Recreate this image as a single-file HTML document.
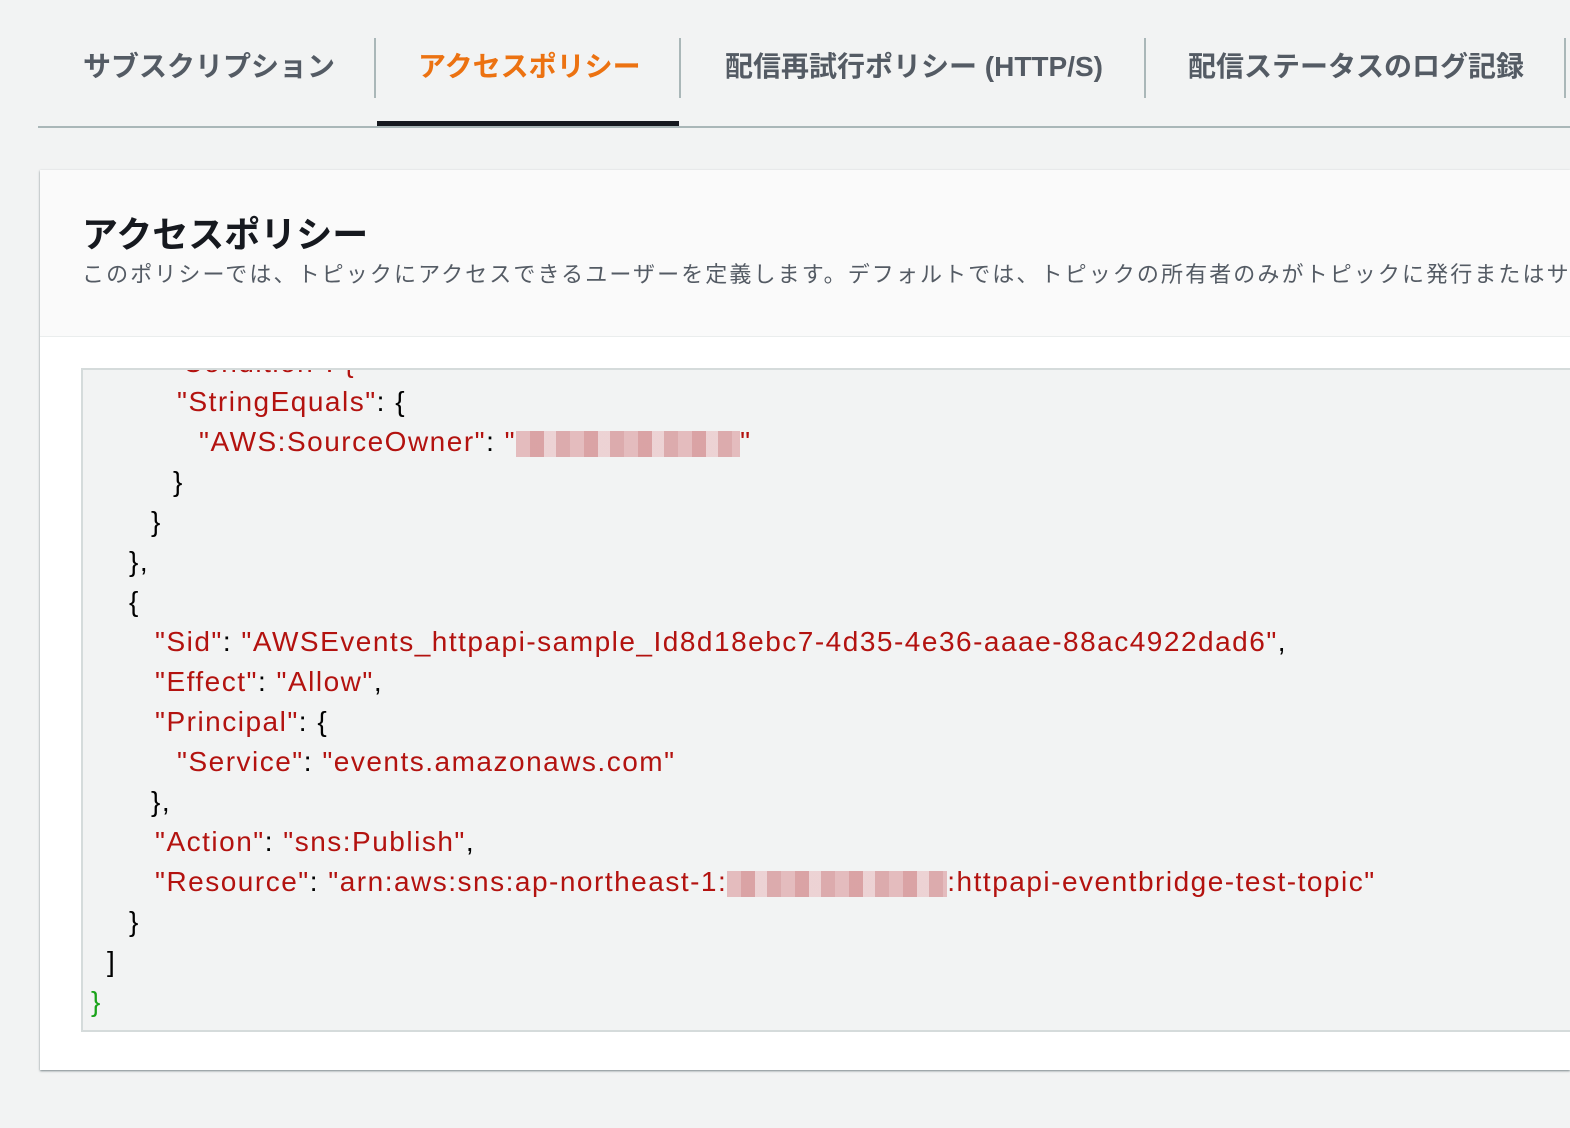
<!DOCTYPE html>
<html><head><meta charset="utf-8"><style>
html,body{margin:0;width:1570px;height:1128px;overflow:hidden}
body{background:#f2f3f3;position:relative;font-family:"Liberation Sans","Noto Sans CJK JP",sans-serif}
.tab{position:absolute;top:46px;font-size:28px;font-weight:bold;color:#545b64;white-space:nowrap;line-height:42px}
.sep{position:absolute;top:38px;width:2px;height:60px;background:#aab7b8}
.card{position:absolute;left:40px;top:170px;width:1530px;height:900px;background:#fff;box-shadow:0 1px 2px rgba(0,28,36,.5);overflow:hidden}
.hdr{position:absolute;left:0;top:0;right:0;height:166px;background:#fafafa;border-bottom:1px solid #eaeded}
.code{position:absolute;left:81px;top:368px;width:1487px;height:660px;background:#f2f3f3;border:2px solid #d5dbdb;border-right:none;overflow:hidden}
.l{position:absolute;font-size:28px;letter-spacing:1.5px;line-height:40px;color:#000;white-space:pre}
.s{color:#b3120f}
.blur{display:inline-block;vertical-align:middle;height:26px;background:repeating-linear-gradient(90deg,#e3b6b8 0 14px,#d79a9c 14px 28px,#eccfd0 28px 40px,#d9a3a5 40px 54px);opacity:.9}
</style></head><body>
<div class="tab" style="left:83px">サブスクリプション</div>
<div class="sep" style="left:374px"></div>
<div class="tab" style="left:418px;color:#ec7211">アクセスポリシー</div>
<div class="sep" style="left:679px"></div>
<div class="tab" style="left:725px">配信再試行ポリシー (HTTP/S)</div>
<div class="sep" style="left:1144px"></div>
<div class="tab" style="left:1188px">配信ステータスのログ記録</div>
<div class="sep" style="left:1564px"></div>
<div style="position:absolute;left:38px;top:126px;width:1532px;height:2px;background:#aab7b8"></div>
<div style="position:absolute;left:377px;top:121px;width:302px;height:5px;background:#16191f"></div>
<div class="card">
<div class="hdr">
<div style="position:absolute;left:42px;top:36px;font-size:36px;font-weight:bold;color:#16191f">アクセスポリシー</div>
<div style="position:absolute;left:42px;top:87px;font-size:22px;letter-spacing:2.1px;color:#545b64;white-space:nowrap">このポリシーでは、トピックにアクセスできるユーザーを定義します。デフォルトでは、トピックの所有者のみがトピックに発行またはサブスクライブできます。</div>
</div></div>
<div class="code">
<div class="l s" style="left:88px;top:-27px">"Condition": {</div>
<div class="l" style="left:94px;top:12px"><span class="s">"StringEquals"</span>: {</div>
<div class="l" style="left:116px;top:52px"><span class="s">"AWS:SourceOwner"</span>: <span class="s">"<span class="blur" style="width:224px"></span>"</span></div>
<div class="l" style="left:90px;top:92px">}</div>
<div class="l" style="left:68px;top:132px">}</div>
<div class="l" style="left:46px;top:172px">},</div>
<div class="l" style="left:46px;top:212px">{</div>
<div class="l" style="left:72px;top:252px"><span class="s">"Sid"</span>: <span class="s">"AWSEvents_httpapi-sample_Id8d18ebc7-4d35-4e36-aaae-88ac4922dad6"</span>,</div>
<div class="l" style="left:72px;top:292px"><span class="s">"Effect"</span>: <span class="s">"Allow"</span>,</div>
<div class="l" style="left:72px;top:332px"><span class="s">"Principal"</span>: {</div>
<div class="l" style="left:94px;top:372px"><span class="s">"Service"</span>: <span class="s">"events.amazonaws.com"</span></div>
<div class="l" style="left:68px;top:412px">},</div>
<div class="l" style="left:72px;top:452px"><span class="s">"Action"</span>: <span class="s">"sns:Publish"</span>,</div>
<div class="l" style="left:72px;top:492px"><span class="s">"Resource"</span>: <span class="s">"arn:aws:sns:ap-northeast-1:<span class="blur" style="width:220px"></span>:httpapi-eventbridge-test-topic"</span></div>
<div class="l" style="left:46px;top:532px">}</div>
<div class="l" style="left:24px;top:572px">]</div>
<div class="l" style="left:8px;top:612px;color:#1aa31a">}</div>
</div>
</body></html>
